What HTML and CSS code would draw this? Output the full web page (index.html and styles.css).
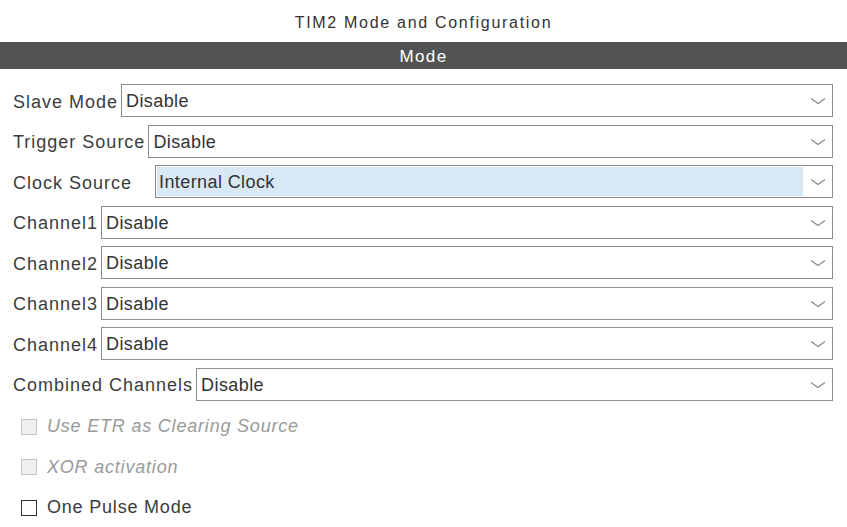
FILE: index.html
```html
<!DOCTYPE html>
<html>
<head>
<meta charset="utf-8">
<link rel="stylesheet" href="styles.css">
</head>
<body>
<div class="page">
  <div class="title">TIM2 Mode and Configuration</div>
  <div class="bar">Mode</div>
  <div class="rows">
    <div class="row"><span class="label">Slave Mode</span><div class="select"><span class="value">Disable</span><span class="arrow"><svg width="16" height="8" viewBox="0 0 16 8"><path d="M1 1.5 L8 6.5 L15 1.5" fill="none" stroke="#8a8a8a" stroke-width="1.3"/></svg></span></div></div>
    <div class="row"><span class="label">Trigger Source</span><div class="select"><span class="value">Disable</span><span class="arrow"><svg width="16" height="8" viewBox="0 0 16 8"><path d="M1 1.5 L8 6.5 L15 1.5" fill="none" stroke="#8a8a8a" stroke-width="1.3"/></svg></span></div></div>
    <div class="row"><span class="label label-clock">Clock Source</span><div class="select active"><span class="value">Internal Clock</span><span class="arrow"><svg width="16" height="8" viewBox="0 0 16 8"><path d="M1 1.5 L8 6.5 L15 1.5" fill="none" stroke="#8a8a8a" stroke-width="1.3"/></svg></span></div></div>
    <div class="row"><span class="label">Channel1</span><div class="select"><span class="value">Disable</span><span class="arrow"><svg width="16" height="8" viewBox="0 0 16 8"><path d="M1 1.5 L8 6.5 L15 1.5" fill="none" stroke="#8a8a8a" stroke-width="1.3"/></svg></span></div></div>
    <div class="row"><span class="label">Channel2</span><div class="select"><span class="value">Disable</span><span class="arrow"><svg width="16" height="8" viewBox="0 0 16 8"><path d="M1 1.5 L8 6.5 L15 1.5" fill="none" stroke="#8a8a8a" stroke-width="1.3"/></svg></span></div></div>
    <div class="row"><span class="label">Channel3</span><div class="select"><span class="value">Disable</span><span class="arrow"><svg width="16" height="8" viewBox="0 0 16 8"><path d="M1 1.5 L8 6.5 L15 1.5" fill="none" stroke="#8a8a8a" stroke-width="1.3"/></svg></span></div></div>
    <div class="row"><span class="label">Channel4</span><div class="select"><span class="value">Disable</span><span class="arrow"><svg width="16" height="8" viewBox="0 0 16 8"><path d="M1 1.5 L8 6.5 L15 1.5" fill="none" stroke="#8a8a8a" stroke-width="1.3"/></svg></span></div></div>
    <div class="row"><span class="label">Combined Channels</span><div class="select"><span class="value">Disable</span><span class="arrow"><svg width="16" height="8" viewBox="0 0 16 8"><path d="M1 1.5 L8 6.5 L15 1.5" fill="none" stroke="#8a8a8a" stroke-width="1.3"/></svg></span></div></div>
    <div class="row check disabled"><span class="box"></span><span class="check-label">Use ETR as Clearing Source</span></div>
    <div class="row check disabled"><span class="box"></span><span class="check-label">XOR activation</span></div>
    <div class="row check"><span class="box"></span><span class="check-label">One Pulse Mode</span></div>
  </div>
</div>
</body>
</html>
```

FILE: styles.css
```css
html, body {
  margin: 0;
  padding: 0;
  background: #ffffff;
}
.page {
  width: 847px;
  height: 527px;
  font-family: "Liberation Sans", Arial, sans-serif;
  color: #3a3a3a;
  overflow: hidden;
}
.title {
  height: 42px;
  line-height: 46px;
  text-align: center;
  font-size: 16px;
  letter-spacing: 1.7px;
  color: #333333;
}
.bar {
  height: 27px;
  line-height: 30px;
  background: #525453;
  color: #ffffff;
  text-align: center;
  font-size: 17px;
  letter-spacing: 1.4px;
}
.rows {
  padding: 15px 14px 0 13px;
  display: flex;
  flex-direction: column;
  gap: 7.5px;
}
.row {
  display: flex;
  align-items: center;
  height: 33px;
}
.label {
  font-size: 18px;
  letter-spacing: 1px;
  margin-right: 3px;
  padding-top: 3px;
  white-space: nowrap;
  color: #3c3c3c;
}
.label-clock {
  margin-right: 23px;
}
.select {
  flex: 1;
  height: 33px;
  box-sizing: border-box;
  border: 1px solid #8c8c8c;
  display: flex;
  align-items: stretch;
  background: #ffffff;
}
.value {
  flex: 1;
  padding-left: 4px;
  padding-top: 2px;
  font-size: 18px;
  letter-spacing: 0.4px;
  line-height: 29px;
  color: #333333;
}
.select.active .value {
  background: #d9e8f5;
  margin: 1px 0 1px 1px;
  line-height: 27px;
  padding-left: 2px;
}
.arrow {
  width: 29px;
  display: flex;
  align-items: center;
  justify-content: center;
  padding-top: 1px;
}
.row.check {
  padding-left: 8px;
  padding-top: 4px;
  box-sizing: border-box;
}
.box {
  width: 16px;
  height: 16px;
  box-sizing: border-box;
  border: 1px solid #333333;
  background: #ffffff;
  margin-right: 10px;
}
.check-label {
  font-size: 18px;
  letter-spacing: 0.8px;
  color: #3c3c3c;
}
.disabled .box {
  border-color: #c4c4c4;
  background: #f0f0f0;
}
.disabled .check-label {
  color: #9a9a9a;
  font-style: italic;
}
```
